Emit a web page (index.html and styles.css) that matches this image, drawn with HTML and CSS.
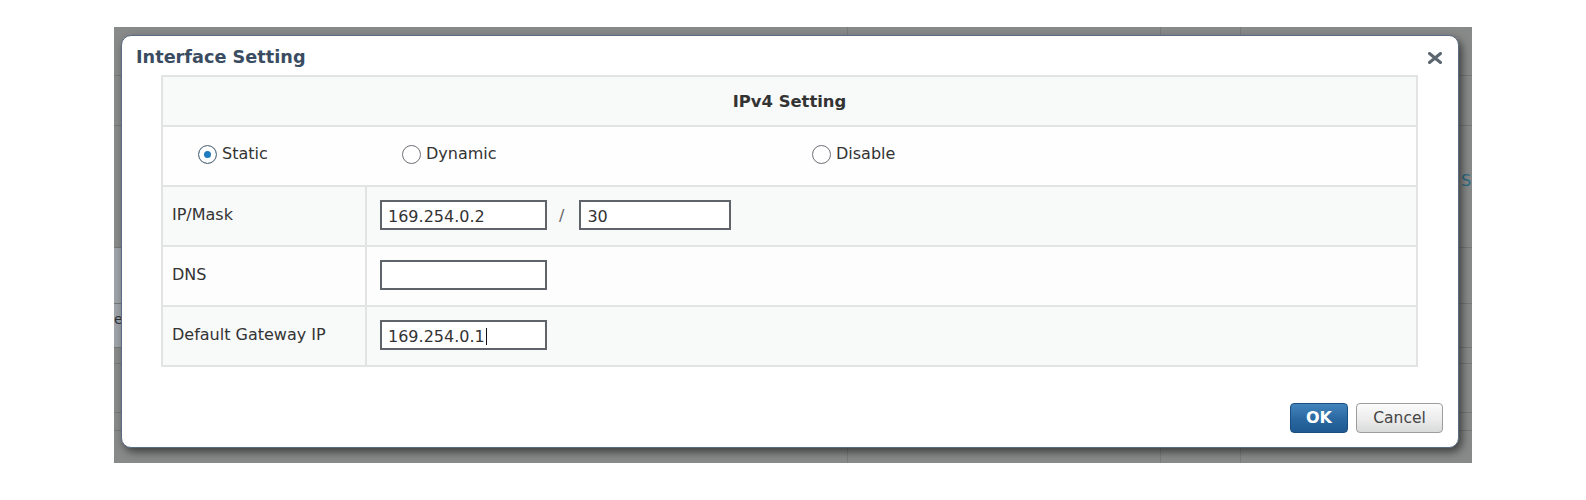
FILE: index.html
```html
<!DOCTYPE html>
<html>
<head>
<meta charset="utf-8">
<title>Interface Setting</title>
<link rel="stylesheet" href="styles.css">
</head>
<body>
<div class="screen">
  <span class="bg-text bg-left">e</span>
  <span class="bg-text bg-right">S</span>
  <div class="modal">
    <div class="modal-head">
      <h2 class="modal-title">Interface Setting</h2>
      <svg class="close" width="16" height="12" viewBox="0 0 16 12"><path d="M2.5 1.5 L13.5 10.5 M13.5 1.5 L2.5 10.5" stroke="#5b6670" stroke-width="3" stroke-linecap="round" fill="none"/></svg>
    </div>
    <div class="ipv4">
      <div class="ipv4-head">IPv4 Setting</div>
      <div class="ipv4-radios">
        <label class="opt"><span class="radio checked"></span>Static</label>
        <label class="opt"><span class="radio"></span>Dynamic</label>
        <label class="opt"><span class="radio"></span>Disable</label>
      </div>
      <div class="frow shade">
        <div class="flabel">IP/Mask</div>
        <div class="fval">
          <div class="field w-ip">169.254.0.2</div>
          <span class="slash">/</span>
          <div class="field w-mask">30</div>
        </div>
      </div>
      <div class="frow">
        <div class="flabel">DNS</div>
        <div class="fval">
          <div class="field w-ip"></div>
        </div>
      </div>
      <div class="frow shade last">
        <div class="flabel">Default Gateway IP</div>
        <div class="fval">
          <div class="field w-ip">169.254.0.1<span class="caret"></span></div>
        </div>
      </div>
    </div>
    <div class="modal-foot">
      <button class="btn btn-ok">OK</button>
      <button class="btn btn-cancel">Cancel</button>
    </div>
  </div>
</div>
</body>
</html>
```

FILE: styles.css
```css
html, body {
  margin: 0;
  padding: 0;
  background: #ffffff;
  font-family: "DejaVu Sans", "Liberation Sans", sans-serif;
  overflow: hidden;
}

.screen {
  position: relative;
  margin: 27px 0 0 114px;
  width: 1358px;
  height: 436px;
  overflow: hidden;
  background-color: #888989;
  background-image:
    linear-gradient(#767777, #767777),
    linear-gradient(#767777, #767777),
    linear-gradient(#767777, #767777),
    linear-gradient(#767777, #767777),
    linear-gradient(#767777, #767777),
    linear-gradient(#767777, #767777),
    linear-gradient(#767777, #767777),
    linear-gradient(#767777, #767777),
    linear-gradient(#7a7b7b, #7a7b7b),
    linear-gradient(#7a7b7b, #7a7b7b),
    linear-gradient(#7a7b7b, #7a7b7b),
    linear-gradient(#9ea3a9, #9ea3a9);
  background-repeat: no-repeat;
  background-size:
    100% 1px, 100% 1px, 100% 1px, 100% 1px,
    100% 1px, 100% 1px, 100% 1px, 100% 1px,
    1px 100%, 1px 100%, 1px 100%,
    8px 100px;
  background-position:
    0 48px, 0 98px, 0 220px, 0 276px,
    0 320px, 0 336px, 0 385px, 0 403px,
    733px 0, 1046px 0, 1126px 0,
    0 220px;
}

.bg-text {
  position: absolute;
  white-space: nowrap;
  line-height: 18px;
}

.bg-left {
  left: 0;
  top: 283px;
  font-size: 14px;
  color: #2f3338;
}

.bg-right {
  left: 1347px;
  top: 145px;
  font-size: 16px;
  color: #2b6c84;
}

.modal {
  position: relative;
  margin: 8px 0 0 7px;
  width: 1338px;
  height: 413px;
  box-sizing: border-box;
  background: #ffffff;
  border: 1px solid #5a6d84;
  border-radius: 10px;
  box-shadow: 3px 4px 8px rgba(0, 0, 0, 0.55);
  display: flex;
  flex-direction: column;
}

.modal-head {
  display: flex;
  justify-content: space-between;
  align-items: flex-start;
  height: 22px;
  padding: 10px 15px 0 14px;
}

.modal-title {
  margin: 0;
  font-size: 17.7px;
  line-height: 22px;
  font-weight: bold;
  color: #3a4c62;
}

.close {
  margin-top: 6px;
  display: block;
}

.ipv4 {
  margin: 7px 40px 0 39px;
  border: 2px solid #e2e4e4;
  color: #333333;
}

.ipv4-head {
  height: 48px;
  background: #f8f9f9;
  border-bottom: 2px solid #e2e4e4;
  display: flex;
  align-items: center;
  justify-content: center;
  font-weight: bold;
  font-size: 16.4px;
  color: #333333;
}

.ipv4-radios {
  height: 58px;
  box-sizing: content-box;
  border-bottom: 2px solid #e2e4e4;
  display: grid;
  grid-template-columns: 204px 410px auto;
  padding-left: 35px;
  align-items: start;
  background: #fefefe;
}

.opt {
  display: flex;
  align-items: center;
  gap: 5px;
  margin-top: 17px;
  font-size: 16px;
  line-height: 20px;
  color: #333333;
}

.radio {
  width: 17px;
  height: 17px;
  border: 1.5px solid #6c7176;
  border-radius: 50%;
  background: #ffffff;
  flex: none;
}

.radio.checked {
  background: #1e7cbf;
  box-shadow: inset 0 0 0 5px #ffffff;
}

.frow {
  display: grid;
  grid-template-columns: 204px 1fr;
  height: 58px;
  border-bottom: 2px solid #e2e4e4;
  background: #fdfdfd;
}

.frow.shade {
  background: #f8f9f9;
}

.frow.last {
  border-bottom: none;
}

.flabel {
  border-right: 2px solid #e2e4e4;
  display: flex;
  align-items: center;
  padding: 0 0 4px 9px;
  font-size: 16px;
  color: #333333;
}

.fval {
  display: flex;
  align-items: center;
  padding: 0 0 2px 13px;
}

.field {
  height: 30px;
  box-sizing: border-box;
  border: 2px solid #5e6469;
  background: #ffffff;
  padding: 3px 0 0 6px;
  font-size: 16px;
  line-height: 23px;
  color: #333333;
  white-space: nowrap;
}

.w-ip {
  width: 167px;
}

.w-mask {
  width: 152px;
}

.slash {
  margin: 0 15px 0 12px;
  font-size: 16px;
  color: #666666;
}

.caret {
  display: inline-block;
  width: 1px;
  height: 17px;
  background: #111111;
  vertical-align: -3px;
  margin-left: 1px;
}

.modal-foot {
  display: flex;
  justify-content: flex-end;
  gap: 8px;
  margin-top: 36px;
  padding-right: 15px;
}

.btn {
  height: 30px;
  box-sizing: border-box;
  padding: 0;
  border-radius: 4px;
  font-family: "DejaVu Sans", "Liberation Sans", sans-serif;
  line-height: 28px;
  cursor: pointer;
}

.btn-ok {
  width: 58px;
  border: 1px solid #1b4f7f;
  background: linear-gradient(#4384bd, #2a67a0 55%, #1f5a91);
  color: #ffffff;
  font-weight: bold;
  font-size: 16px;
}

.btn-cancel {
  width: 87px;
  border: 1px solid #9b9d9f;
  background: linear-gradient(#fbfbfb, #ececec 55%, #d9dadb);
  color: #444444;
  font-size: 15.5px;
}
```
